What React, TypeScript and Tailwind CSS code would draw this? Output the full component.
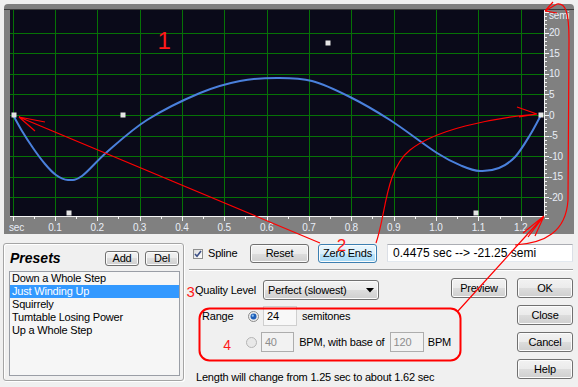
// Pitch envelope dialog

const X = (t: number) => 12.5 + t * 423.5;
const Y = (s: number) => 115 - s * 4.12;

const curvePts: [number, number][] = [
  [13, 115], [22, 131], [33, 148], [45, 164], [56, 175], [68, 180], [82, 176],
  [107, 152], [147, 120], [200, 93], [240, 81], [277, 78], [312, 81], [350, 97],
  [390, 120], [437, 153], [462, 166], [480, 171], [499, 168], [515, 157], [530, 135], [541, 115],
];

function smoothPath(p: [number, number][]) {
  let d = `M${p[0][0]},${p[0][1]}`;
  for (let i = 0; i < p.length - 1; i++) {
    const p0 = p[i - 1] || p[i];
    const p1 = p[i];
    const p2 = p[i + 1];
    const p3 = p[i + 2] || p2;
    const c1x = p1[0] + (p2[0] - p0[0]) / 6;
    const c1y = p1[1] + (p2[1] - p0[1]) / 6;
    const c2x = p2[0] - (p3[0] - p1[0]) / 6;
    const c2y = p2[1] - (p3[1] - p1[1]) / 6;
    d += ` C${c1x.toFixed(1)},${c1y.toFixed(1)} ${c2x.toFixed(1)},${c2y.toFixed(1)} ${p2[0]},${p2[1]}`;
  }
  return d;
}

const handles: [number, number][] = [
  [14, 115], [123, 115], [328, 43], [69, 213], [476, 213], [541, 115],
];

function Graph() {
  const secs = Array.from({ length: 13 }, (_, i) => i / 10);
  const semis = [20, 15, 10, 5, 0, -5, -10, -15, -20];
  const minorSemi = Array.from({ length: 51 }, (_, i) => i - 25);
  const halfSecs = Array.from({ length: 26 }, (_, i) => i * 0.05);

  return (
    <svg width="570" height="230" viewBox="4 4 570 230" className="block">
      <line x1="4" y1="9.5" x2="574" y2="9.5" stroke="#3c3c3c" />
      <rect x="10" y="10" width="534" height="206" fill="#0a0a19" />
      {/* grid */}
      {secs.map((t) => (
        <line key={t} x1={Math.round(X(t)) + 0.5} y1="10" x2={Math.round(X(t)) + 0.5} y2="216" stroke="#067206" />
      ))}
      {semis.map((s) => (
        <line key={s} x1="10" y1={Math.round(Y(s)) + 0.5} x2="544" y2={Math.round(Y(s)) + 0.5} stroke="#067206" />
      ))}
      {/* axes */}
      <line x1="544.5" y1="10" x2="544.5" y2="217" stroke="#f4f4f4" />
      <line x1="10" y1="216.5" x2="545" y2="216.5" stroke="#f4f4f4" />
      {minorSemi.map((s) => (
        <line key={s} x1="545" y1={Math.round(Y(s)) + 0.5} x2={s % 5 === 0 ? 549 : 547} y2={Math.round(Y(s)) + 0.5} stroke="#f4f4f4" />
      ))}
      {halfSecs.map((t, i) => (
        <line key={i} x1={Math.round(X(t)) + 0.5} y1="217" x2={Math.round(X(t)) + 0.5} y2={i % 2 === 0 ? 221 : 219} stroke="#f4f4f4" />
      ))}
      <g fontFamily="'Liberation Sans', Arial, sans-serif" fontSize="10" fill="#e9eef7">
        <text x="549" y="19">semi</text>
        {semis.map((s) => (
          <text key={s} x="549" y={Y(s) + 3.5}>{s}</text>
        ))}
        <text x="9" y="230.5">sec</text>
        {secs.slice(1).map((t) => (
          <text key={t} x={X(t)} y="230.5" textAnchor="middle">{t.toFixed(1)}</text>
        ))}
      </g>
      {/* envelope */}
      <path d={smoothPath(curvePts)} fill="none" stroke="#4a80dc" strokeWidth="2" />
      {handles.map(([x, y], i) => (
        <rect key={i} x={x - 2.5} y={y - 2.5} width="5" height="5" fill="#e4e4e4" />
      ))}
    </svg>
  );
}

function Btn({ children, className = "", blue = false }: {
  children: React.ReactNode;
  className?: string;
  blue?: boolean;
}) {
  const look = blue
    ? "border-[#3c7fb1] bg-[linear-gradient(#eaf6fd,#d9f0fc_50%,#bee6fd_50%,#a7d9f5)]"
    : "border-[#707070] bg-[linear-gradient(#f2f2f2,#ebebeb_50%,#dddddd_50%,#cfcfcf)]";
  return (
    <div className={`flex items-center justify-center rounded-[3px] border shadow-[inset_0_0_0_1px_#fcfcfc] text-black ${look} ${className}`}>
      {children}
    </div>
  );
}

function Radio({ on = false, disabled = false }: { on?: boolean; disabled?: boolean }) {
  return (
    <svg width="11" height="11" viewBox="0 0 11 11">
      <circle cx="5.5" cy="5.5" r="5" fill={disabled ? "#e8e8e8" : "#eeeeee"} stroke={disabled ? "#b4b4b4" : "#8a8a8a"} />
      {on && <circle cx="5.5" cy="5.5" r="3" fill="#1f5fb8" />}
      {on && <circle cx="4.8" cy="4.7" r="1.1" fill="#8fc4f4" />}
    </svg>
  );
}

const presets = ["Down a Whole Step", "Just Winding Up", "Squirrely", "Tumtable Losing Power", "Up a Whole Step"];

export default function App() {
  return (
    <div className="relative w-[578px] h-[387px] overflow-hidden bg-[#f0f0f0] font-['Liberation_Sans',Arial,sans-serif] text-[11px] tracking-[-0.2px] text-black">
      {/* Graph panel */}
      <div className="pl-[4px] pt-[4px]">
        <div className="w-[570px] h-[230px] overflow-hidden rounded-t-[4px] bg-[#808080]">
          <Graph />
        </div>
      </div>

      <div className="flex mt-[9px]">
        {/* Presets group */}
        <div className="ml-[3px] w-[181px] h-[138px] rounded-[3px] border border-[#a5a5a5] shadow-[inset_1px_1px_0_#fff,1px_1px_0_#fff]">
          <div className="flex items-center mt-[7px] h-[15px]">
            <span className="ml-[6px] text-[14px] font-bold italic tracking-normal">Presets</span>
            <Btn className="ml-auto w-[34px] h-[15px]">Add</Btn>
            <Btn className="ml-[6px] mr-[4px] w-[34px] h-[15px]">Del</Btn>
          </div>
          <div className="mt-[5px] ml-[5px] w-[171px] h-[105px] border border-[#9a9ea6] bg-[#f6f6f6]">
            {presets.map((p, i) => (
              <div key={p} className={`h-[13px] leading-[13px] pl-[2px] ${i === 1 ? "bg-[#3399ff] text-white" : ""}`}>
                {p}
              </div>
            ))}
          </div>
        </div>

        {/* Right side */}
        <div className="ml-[5px] w-[384px] pt-[1px]">
          <div className="flex items-start h-[19px]">
            <div className="flex items-center w-[61px] h-[19px] pl-[4px]">
              <div className="w-[10px] h-[10px] border border-[#8e8f8f] bg-[linear-gradient(135deg,#dcdcdc,#ffffff)] flex items-center justify-center">
                <svg width="8" height="8" viewBox="0 0 8 8">
                  <path d="M1 4 L3 6.3 L7 1" fill="none" stroke="#3b4f86" strokeWidth="1.6" />
                </svg>
              </div>
              <span className="ml-[5px]">Spline</span>
            </div>
            <Btn className="w-[59px] h-[19px]">Reset</Btn>
            <Btn blue className="ml-[9px] w-[59px] h-[19px]">Zero Ends</Btn>
            <div className="ml-[10px] w-[186px] h-[18px] border border-[#abadb3] border-l-[#dbdfe6] border-r-[#dbdfe6] border-b-[#e3e9ef] bg-white pl-[5px] text-[12px] leading-[16px] tracking-normal">
              0.4475 sec --&gt; -21.25 semi
            </div>
          </div>

          <div className="mt-[6px] h-[2px] border-t border-[#a0a0a0] border-b border-b-white" />

          <div className="flex mt-[7px]">
            <div className="w-[262px] shrink-0 whitespace-nowrap">
              <div className="flex items-center mt-[2px] h-[20px]">
                <span className="w-[74px] pl-[6px]">Quality Level</span>
                <Btn className="w-[116px] h-[20px] justify-between! pl-[4px] pr-[4px]">
                  <span>Perfect (slowest)</span>
                  <svg width="8" height="5" viewBox="0 0 8 5">
                    <path d="M0 0 H8 L4 4.5 Z" fill="#000" />
                  </svg>
                </Btn>
              </div>
              <div className="flex items-center mt-[6px] h-[20px]">
                <span className="w-[59px] pl-[13px]">Range</span>
                <div className="w-[15px] flex"><Radio on /></div>
                <div className="w-[34px] h-[20px] border border-[#cfcfcf] bg-[#f8f8f8] pl-[3px] leading-[18px]">24</div>
                <span className="ml-[5px]">semitones</span>
              </div>
              <div className="flex items-center mt-[6px] h-[20px]">
                <span className="w-[59px]" />
                <div className="w-[15px] flex"><Radio disabled /></div>
                <div className="w-[34px] h-[20px] border border-[#adadad] bg-[#f2f2f2] pl-[3px] leading-[18px] text-[#8d8d8d]">40</div>
                <span className="ml-[5px] w-[93px]">BPM, with base of</span>
                <div className="w-[35px] h-[20px] border border-[#adadad] bg-[#f2f2f2] pl-[3px] leading-[18px] text-[#8d8d8d]">120</div>
                <span className="ml-[4px]">BPM</span>
              </div>
              <div className="mt-[19px] pl-[7px] leading-[13px]">
                Length will change from 1.25 sec to about 1.62 sec
              </div>
            </div>
            <Btn className="w-[56px] h-[20px]">Preview</Btn>
            <div className="ml-[10px] flex flex-col gap-[7px]">
              <Btn className="w-[56px] h-[20px]">OK</Btn>
              <Btn className="w-[56px] h-[20px]">Close</Btn>
              <Btn className="w-[56px] h-[20px]">Cancel</Btn>
              <Btn className="w-[56px] h-[20px]">Help</Btn>
            </div>
          </div>
        </div>
      </div>

      {/* Red annotations drawn over the dialog */}
      <svg width="578" height="387" className="absolute inset-0 pointer-events-none">
        <g fill="none" stroke="#ff0000" strokeWidth="1.2">
          <path d="M320,243 L19,117 M19,117 L45,122 M19,117 L35,131" />
          <path d="M376,243 C386,215 385,170 410,150 C435,130 490,118 537,114 M537,114 L517,107 M537,114 L519,117" />
          <path d="M458,311 L544,216 M544,216 L523,233 M544,216 L528,237 M544,216 L535,236" />
          <path d="M515,245 C545,243 566,232 568,200 L569,40 C569,10 565,3 557,4 L545,11 M545,11 L553,2 M545,11 L557,13" />
          <rect x="199.5" y="308.5" width="261" height="52" rx="10" strokeWidth="2" />
        </g>
        <g fill="#ff1a1a" fontFamily="'Liberation Sans', Arial, sans-serif" textAnchor="middle">
          <text x="164" y="49" fontSize="24">1</text>
          <text x="341.5" y="250.5" fontSize="17">2</text>
          <text x="190.5" y="296.5" fontSize="15">3</text>
          <text x="227" y="349.5" fontSize="14">4</text>
        </g>
      </svg>
    </div>
  );
}
